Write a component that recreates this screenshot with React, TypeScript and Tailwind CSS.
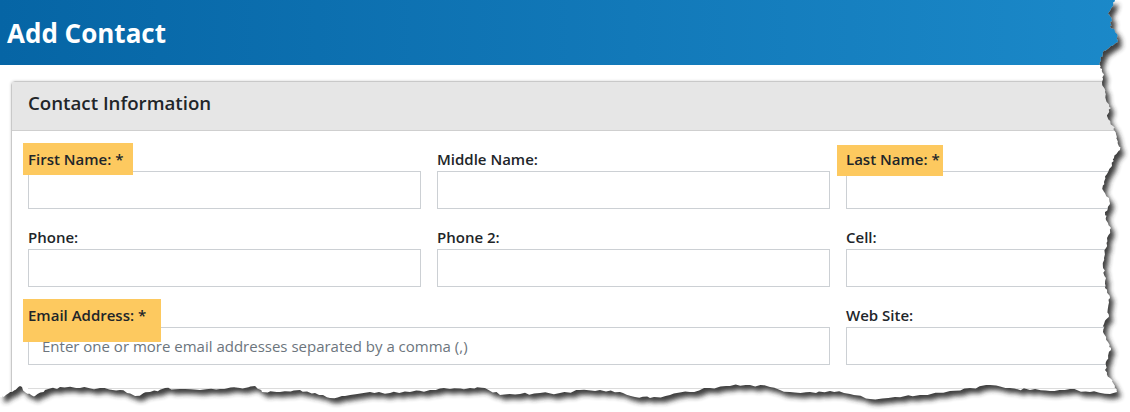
import type { ReactNode } from "react";

type Pt = [number, number];

// Hand-traced outline of the torn paper edge (right side, then bottom).
const RIGHT_EDGE: Pt[] = [
  [1115, 0], [1113, 6], [1108, 14], [1112, 20], [1110, 26], [1117, 34], [1118, 42],
  [1109, 48], [1103, 52], [1101, 60], [1100, 68], [1104, 74], [1102, 82], [1105, 92],
  [1106, 100], [1111, 108], [1107, 116], [1113, 126], [1116, 134], [1118, 142],
  [1120, 150], [1114, 158], [1112, 166], [1107, 174], [1104, 182], [1103, 190],
  [1109, 198], [1110, 204], [1105, 212], [1106, 220], [1111, 228], [1107, 238],
  [1106, 248], [1104, 258], [1103, 268], [1106, 278], [1105, 288], [1110, 298],
  [1108, 308], [1109, 316], [1104, 324], [1103, 332], [1108, 342], [1111, 350],
  [1107, 360], [1105, 370], [1110, 378], [1115, 386], [1117, 392],
];

const BOTTOM_EDGE: Pt[] = [
  [1110, 394], [1090, 392], [1070, 389], [1050, 391], [1030, 390], [1010, 388],
  [990, 385], [970, 388], [950, 391], [920, 395], [895, 397], [870, 399], [850, 394],
  [830, 391], [810, 392], [790, 392], [770, 387], [750, 385], [730, 386], [710, 388],
  [690, 392], [670, 395], [650, 398], [635, 397], [620, 392], [600, 390], [580, 390],
  [560, 393], [540, 393], [520, 394], [500, 395], [485, 388], [470, 388], [450, 389],
  [430, 390], [410, 392], [390, 393], [370, 392], [345, 396], [330, 398], [315, 393],
  [300, 390], [280, 392], [262, 392], [255, 386], [240, 388], [220, 389], [200, 390],
  [180, 389], [165, 388], [150, 392], [135, 396], [120, 390], [100, 388], [80, 388],
  [60, 387], [45, 390], [35, 396], [28, 394], [20, 386], [12, 392], [5, 396], [0, 397],
];

// small deterministic jitter so the tear looks ragged rather than smooth
function jag(points: Pt[], seed: number): Pt[] {
  let s = seed;
  const rnd = () => {
    s = (s * 9301 + 49297) % 233280;
    return s / 233280 - 0.5;
  };
  const out: Pt[] = [];
  for (let i = 0; i < points.length - 1; i++) {
    const [ax, ay] = points[i]!;
    const [bx, by] = points[i + 1]!;
    out.push([ax, ay]);
    for (let k = 1; k < 4; k++) {
      const t = k / 4;
      out.push([ax + (bx - ax) * t + rnd() * 2.5, ay + (by - ay) * t + rnd() * 2.5]);
    }
  }
  out.push(points[points.length - 1]!);
  return out;
}

const KEPT = "M0 0 " + [...jag(RIGHT_EDGE, 7), ...jag(BOTTOM_EDGE, 31)]
  .map(([x, y]) => `L${x.toFixed(1)} ${y.toFixed(1)}`)
  .join(" ") + " Z";
const OUTSIDE = "M0 0 H1130 V412 H0 Z " + KEPT;

function TornEdge() {
  return (
    <svg
      className="pointer-events-none absolute inset-0 z-20"
      width={1130}
      height={412}
      viewBox="0 0 1130 412"
    >
      <defs>
        <clipPath id="outside">
          <path d={OUTSIDE} clipRule="evenodd" />
        </clipPath>
        <filter id="soft" x="-5%" y="-5%" width="110%" height="110%">
          <feGaussianBlur stdDeviation="2.4" />
        </filter>
      </defs>
      <path d={OUTSIDE} fill="#ffffff" fillRule="evenodd" />
      <g clipPath="url(#outside)">
        <path d={KEPT} transform="translate(4,5)" fill="#2a2a2a" opacity={0.9} filter="url(#soft)" />
      </g>
    </svg>
  );
}

type Mark = { left: number; top: number; w: number; h: number };

function Field({
  label,
  mark,
  placeholder,
  className,
}: {
  label: ReactNode;
  mark?: Mark;
  placeholder?: string;
  className?: string;
}) {
  return (
    <div className={className}>
      <label className="relative z-10 mb-[2px] block text-[15px] font-semibold leading-[20px] text-[#212529]">
        {mark ? (
          <span
            className="absolute bg-[#fdc95f]"
            style={{ left: mark.left, top: mark.top, width: mark.w, height: mark.h }}
          />
        ) : null}
        <span className="relative">{label}</span>
      </label>
      <div className="flex h-[38px] items-center border border-[#ccd0d4] bg-white px-[13px] text-[15px] text-[#6c757d]">
        {placeholder}
      </div>
    </div>
  );
}

export default function App() {
  return (
    <div className="relative h-[412px] w-[1130px] overflow-hidden bg-white font-['Open_Sans',sans-serif]">
      <header className="flex h-[65px] items-center bg-gradient-to-r from-[#0665a5] to-[#1b89c9] pl-[7px]">
        <h1 className="text-[26px] font-bold leading-[36px] text-white">Add Contact</h1>
      </header>

      <section className="ml-[11px] mt-[16px] w-[1245px] rounded-t-[4px] border border-[#c9c9c9] shadow-[0_0_3px_rgba(0,0,0,0.18)]">
        <div className="flex h-[49px] items-center border-b border-[#cfcfcf] bg-[#e6e6e6] px-[16px] pb-[5px]">
          <h2 className="text-[18.7px] font-semibold text-[#212529]">Contact Information</h2>
        </div>

        <div className="px-[16px] pt-[18px]">
          <div className="grid grid-cols-[393px_393px_393px] gap-x-[16px] gap-y-[18px]">
            <Field label="First Name: *" mark={{ left: -5, top: -6, w: 110, h: 32 }} />
            <Field label="Middle Name:" />
            <Field label="Last Name: *" mark={{ left: -9, top: -4, w: 106, h: 31 }} />

            <Field label="Phone:" />
            <Field label="Phone 2:" />
            <Field label="Cell:" />

            <Field
              className="col-span-2"
              label="Email Address: *"
              mark={{ left: -5, top: -6, w: 138, h: 43 }}
              placeholder="Enter one or more email addresses separated by a comma (,)"
            />
            <Field label="Web Site:" />
          </div>

          <div className="mt-[23px] h-[40px] border-t border-[#dcdcdc]" />
        </div>
      </section>

      <TornEdge />
    </div>
  );
}
